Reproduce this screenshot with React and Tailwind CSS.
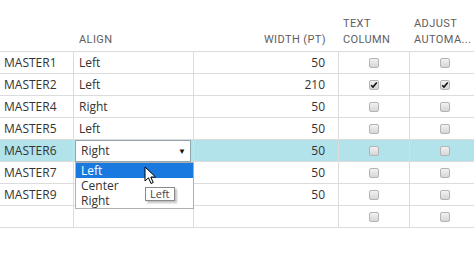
import { useState } from 'react';

const rows = [
    { name: 'MASTER1', align: 'Left', width: '50', text: false, auto: false },
    { name: 'MASTER2', align: 'Left', width: '210', text: true, auto: true },
    { name: 'MASTER4', align: 'Right', width: '50', text: false, auto: false },
    { name: 'MASTER5', align: 'Left', width: '50', text: false, auto: false },
    { name: 'MASTER6', align: 'Right', width: '50', text: false, auto: false, active: true },
    { name: 'MASTER7', align: '', width: '50', text: false, auto: false },
    { name: 'MASTER9', align: '', width: '50', text: false, auto: false },
    { name: '', align: '', width: '', text: false, auto: false },
];

const Checkbox = ({ checked }) => (
    <div className="w-[10px] h-[10px] rounded-[2px] border border-[#b4b4b4] bg-gradient-to-b from-[#f2f2f2] to-[#d6d6d6] flex items-center justify-center">
        {checked && (
            <svg width="8" height="8" viewBox="0 0 8 8">
                <path d="M1.2 4.2 L3 6 L6.8 1.5" stroke="#111" strokeWidth="1.6" fill="none" />
            </svg>
        )}
    </div>
);

const Cursor = () => (
    <svg width="13" height="19" viewBox="0 0 13 19" className="absolute left-[144px] top-[166px]">
        <path d="M1 1 L1 15 L4.5 11.8 L7 17.5 L9.2 16.5 L6.8 11 L11.5 11 Z" fill="#fff" stroke="#000" strokeWidth="1" strokeLinejoin="round" />
    </svg>
);

export default function App() {
    const [open] = useState(true);
    const header = "text-[11px] text-[#5e5e5e] tracking-[0.4px] leading-[16px]";

    return (
        <div className="relative w-[474px] h-[268px] bg-white overflow-hidden" style={{ fontFamily: '"Open Sans", sans-serif' }}>
            <div className="flex h-[52px] items-end pb-[3px] border-b border-[#dcdcdc]" style={{ fontFamily: 'Roboto, sans-serif' }}>
                <div className="w-[74px] shrink-0"></div>
                <div className={`w-[120px] shrink-0 pl-[5px] ${header}`}>ALIGN</div>
                <div className={`w-[145px] shrink-0 pr-[13px] text-right ${header}`}>WIDTH (PT)</div>
                <div className={`w-[71px] shrink-0 pl-[4px] ${header}`}>TEXT<br />COLUMN</div>
                <div className={`w-[70px] shrink-0 pl-[4px] ${header}`}>ADJUST<br />AUTOMA...</div>
            </div>

            {rows.map((r, i) => (
                <div key={i} className={`flex h-[22px] border-b border-[#dcdcdc] text-[12px] text-[#333] ${r.active ? 'bg-[#b2e2ea]' : 'bg-white'}`}>
                    <div className="w-[74px] shrink-0 pl-[4px] flex items-center border-r border-[#dcdcdc]">{r.name}</div>
                    <div className="w-[120px] shrink-0 pl-[5px] flex items-center border-r border-[#dcdcdc]">{r.active ? '' : r.align}</div>
                    <div className="w-[145px] shrink-0 pr-[13px] flex items-center justify-end border-r border-[#dcdcdc]">{r.width}</div>
                    <div className="w-[71px] shrink-0 flex items-center justify-center border-r border-[#dcdcdc]">
                        <Checkbox checked={r.text} />
                    </div>
                    <div className="w-[70px] shrink-0 flex items-center justify-center">
                        <Checkbox checked={r.auto} />
                    </div>
                </div>
            ))}

            {/* select box in active row */}
            <div className="absolute left-[75px] top-[140px] w-[116px] h-[22px] bg-white border border-[#8fa7b0] flex items-center justify-between pl-[5px] pr-[4px] text-[12px] text-[#333]">
                <span>Right</span>
                <span className="text-[8px] text-[#111]">▼</span>
            </div>

            {open && (
                <div className="absolute left-[75px] top-[162px] w-[119px] h-[47px] bg-white border border-[#b0b0b0] text-[12px] text-[#333] leading-[15px]">
                    <div className="h-[15px] bg-[#1a79df] text-white pl-[5px]">Left</div>
                    <div className="h-[15px] pl-[5px]">Center</div>
                    <div className="h-[15px] pl-[5px]">Right</div>
                </div>
            )}

            <div className="absolute left-[145px] top-[187px] h-[14px] px-[4px] bg-white border border-[#8a8a8a] shadow-[2px_2px_2px_rgba(0,0,0,0.25)] text-[11px] leading-[12px] text-[#444]">
                Left
            </div>

            <Cursor />
        </div>
    );
}
